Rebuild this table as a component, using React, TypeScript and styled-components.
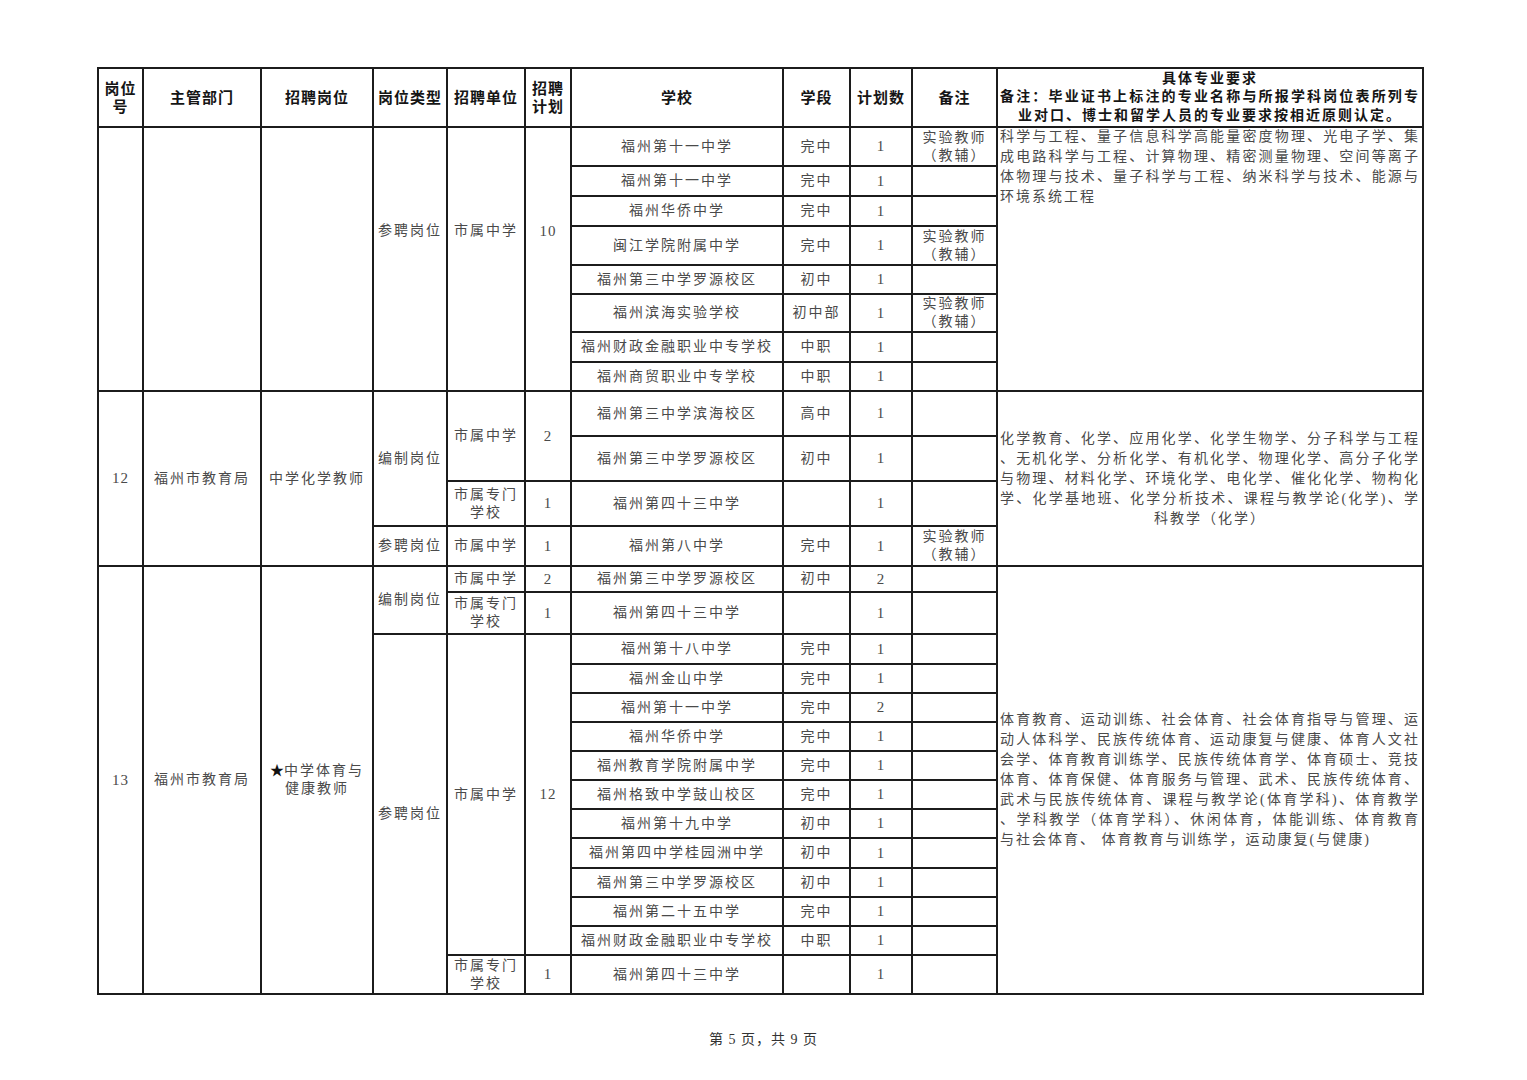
import React from "react";
import styled, { createGlobalStyle } from "styled-components";

const GlobalStyle = createGlobalStyle`
  html, body {
    margin: 0;
    padding: 0;
    background: #ffffff;
  }
  body {
    font-family: "Liberation Serif", "Noto Sans CJK SC", serif;
    color: #4a4a4a;
  }
`;

const Page = styled.div`
  width: 1527px;
  height: 1080px;
  padding-top: 67px;
  box-sizing: border-box;
`;

const Sheet = styled.table`
  margin-left: 97px;
  width: 1325px;
  border-collapse: collapse;
  table-layout: fixed;
  border: 2px solid #1c1c1c;
`;

const Col = styled.col<{ $w: number }>`
  width: ${(p) => p.$w}px;
`;

const Row = styled.tr<{ $h: number }>`
  height: ${(p) => p.$h}px;
`;

const Head = styled.th<{ $size?: number }>`
  border: 2px solid #1c1c1c;
  padding: 0 1px;
  font-size: ${(p) => p.$size ?? 15}px;
  font-weight: 700;
  letter-spacing: 1px;
  line-height: 18px;
  color: #151515;
  text-align: center;
  vertical-align: middle;
`;

const Cell = styled.td<{ $padTop?: number }>`
  border: 2px solid #1c1c1c;
  padding: ${(p) => (p.$padTop ? `${p.$padTop}px 1px 0` : "0 1px")};
  font-size: 14px;
  letter-spacing: 2px;
  line-height: 18px;
  color: #4a4a4a;
  text-align: center;
  vertical-align: ${(p) => (p.$padTop ? "top" : "middle")};
  overflow: hidden;
`;

const Num = styled.span`
  font-size: 15px;
  letter-spacing: 1px;
`;

const Star = styled.span`
  color: #111111;
  letter-spacing: 0;
`;

const Spec = styled.td<{ $top?: boolean }>`
  border: 2px solid #1c1c1c;
  padding: 0 2px;
  font-size: 14px;
  letter-spacing: 2px;
  line-height: 20px;
  color: #4a4a4a;
  vertical-align: ${(p) => (p.$top ? "top" : "middle")};
`;

const SpecBody = styled.div<{ $top?: boolean }>`
  margin-top: ${(p) => (p.$top ? -1 : 0)}px;
`;

const SpecHead = styled.th`
  border: 2px solid #1c1c1c;
  padding: 0 2px;
  font-size: 14px;
  font-weight: 700;
  letter-spacing: 2px;
  line-height: 18.5px;
  color: #151515;
  vertical-align: middle;
`;

const Line = styled.div<{ $mode: "fill" | "left" | "center" }>`
  white-space: nowrap;
  text-align: ${(p) => (p.$mode === "center" ? "center" : "left")};
  text-align-last: ${(p) =>
    p.$mode === "fill" ? "justify" : p.$mode === "center" ? "center" : "left"};
`;

const Footer = styled.div`
  margin-top: 35px;
  text-align: center;
  font-size: 14px;
  line-height: 20px;
  letter-spacing: 1px;
  color: #333333;
`;

type School = [string, string, string, boolean];

const note = (
  <>
    实验教师
    <br />
    （教辅）
  </>
);

const schoolCells = (s: School) => (
  <>
    <Cell>{s[0]}</Cell>
    <Cell>{s[1]}</Cell>
    <Cell>
      <Num>{s[2]}</Num>
    </Cell>
    <Cell>{s[3] ? note : null}</Cell>
  </>
);

const special = (
  <>
    市属专门
    <br />
    学校
  </>
);

const lines = (list: string[], last: "left" | "center") =>
  list.map((t, i) => (
    <Line key={i} $mode={i === list.length - 1 ? last : "fill"}>
      {t}
    </Line>
  ));

const spec11 = [
  "科学与工程、量子信息科学高能量密度物理、光电子学、集",
  "成电路科学与工程、计算物理、精密测量物理、空间等离子",
  "体物理与技术、量子科学与工程、纳米科学与技术、能源与",
  "环境系统工程",
];

const spec12 = [
  "化学教育、化学、应用化学、化学生物学、分子科学与工程",
  "、无机化学、分析化学、有机化学、物理化学、高分子化学",
  "与物理、材料化学、环境化学、电化学、催化化学、物构化",
  "学、化学基地班、化学分析技术、课程与教学论(化学)、学",
  "科教学（化学）",
];

const spec13 = [
  "体育教育、运动训练、社会体育、社会体育指导与管理、运",
  "动人体科学、民族传统体育、运动康复与健康、体育人文社",
  "会学、体育教育训练学、民族传统体育学、体育硕士、竞技",
  "体育、体育保健、体育服务与管理、武术、民族传统体育、",
  "武术与民族传统体育、课程与教学论(体育学科)、体育教学",
  "、学科教学（体育学科）、休闲体育，体能训练、体育教育",
  "与社会体育、 体育教育与训练学，运动康复(与健康)",
];

const g11: School[] = [
  ["福州第十一中学", "完中", "1", true],
  ["福州第十一中学", "完中", "1", false],
  ["福州华侨中学", "完中", "1", false],
  ["闽江学院附属中学", "完中", "1", true],
  ["福州第三中学罗源校区", "初中", "1", false],
  ["福州滨海实验学校", "初中部", "1", true],
  ["福州财政金融职业中专学校", "中职", "1", false],
  ["福州商贸职业中专学校", "中职", "1", false],
];
const h11 = [39, 30, 30, 39, 29, 38, 30, 29];

const g13: School[] = [
  ["福州第十八中学", "完中", "1", false],
  ["福州金山中学", "完中", "1", false],
  ["福州第十一中学", "完中", "2", false],
  ["福州华侨中学", "完中", "1", false],
  ["福州教育学院附属中学", "完中", "1", false],
  ["福州格致中学鼓山校区", "完中", "1", false],
  ["福州第十九中学", "初中", "1", false],
  ["福州第四中学桂园洲中学", "初中", "1", false],
  ["福州第三中学罗源校区", "初中", "1", false],
  ["福州第二十五中学", "完中", "1", false],
  ["福州财政金融职业中专学校", "中职", "1", false],
];
const h13 = [30, 29, 29, 29, 29, 29, 29, 30, 29, 29, 29];

export default function App() {
  return (
    <Page>
      <GlobalStyle />
      <Sheet>
        <colgroup>
          {[45, 118, 112, 74, 78, 46, 212, 67, 62, 85, 426].map((w, i) => (
            <Col key={i} $w={w} />
          ))}
        </colgroup>
        <thead>
          <Row $h={59}>
            <Head>
              岗位
              <br />号
            </Head>
            <Head>主管部门</Head>
            <Head>招聘岗位</Head>
            <Head>岗位类型</Head>
            <Head>招聘单位</Head>
            <Head>
              招聘
              <br />
              计划
            </Head>
            <Head>学校</Head>
            <Head>学段</Head>
            <Head>计划数</Head>
            <Head>备注</Head>
            <SpecHead>
              <Line $mode="center">具体专业要求</Line>
              <Line $mode="fill">备注：毕业证书上标注的专业名称与所报学科岗位表所列专</Line>
              <Line $mode="center">业对口、博士和留学人员的专业要求按相近原则认定。</Line>
            </SpecHead>
          </Row>
        </thead>
        <tbody>
          {g11.map((s, i) => (
            <Row key={`a${i}`} $h={h11[i]}>
              {i === 0 && (
                <>
                  <Cell rowSpan={8} />
                  <Cell rowSpan={8} />
                  <Cell rowSpan={8} />
                  <Cell rowSpan={8} $padTop={94}>
                    参聘岗位
                  </Cell>
                  <Cell rowSpan={8} $padTop={94}>
                    市属中学
                  </Cell>
                  <Cell rowSpan={8} $padTop={94}>
                    <Num>10</Num>
                  </Cell>
                </>
              )}
              {schoolCells(s)}
              {i === 0 && (
                <Spec rowSpan={8} $top>
                  <SpecBody $top>{lines(spec11, "left")}</SpecBody>
                </Spec>
              )}
            </Row>
          ))}

          <Row $h={45}>
            <Cell rowSpan={4}>
              <Num>12</Num>
            </Cell>
            <Cell rowSpan={4}>福州市教育局</Cell>
            <Cell rowSpan={4}>中学化学教师</Cell>
            <Cell rowSpan={3}>编制岗位</Cell>
            <Cell rowSpan={2}>市属中学</Cell>
            <Cell rowSpan={2}>
              <Num>2</Num>
            </Cell>
            {schoolCells(["福州第三中学滨海校区", "高中", "1", false])}
            <Spec rowSpan={4}>
              <SpecBody>{lines(spec12, "center")}</SpecBody>
            </Spec>
          </Row>
          <Row $h={45}>{schoolCells(["福州第三中学罗源校区", "初中", "1", false])}</Row>
          <Row $h={45}>
            <Cell>{special}</Cell>
            <Cell>
              <Num>1</Num>
            </Cell>
            {schoolCells(["福州第四十三中学", "", "1", false])}
          </Row>
          <Row $h={40}>
            <Cell>参聘岗位</Cell>
            <Cell>市属中学</Cell>
            <Cell>
              <Num>1</Num>
            </Cell>
            {schoolCells(["福州第八中学", "完中", "1", true])}
          </Row>

          <Row $h={26}>
            <Cell rowSpan={14}>
              <Num>13</Num>
            </Cell>
            <Cell rowSpan={14}>福州市教育局</Cell>
            <Cell rowSpan={14}>
              <Star>★</Star>中学体育与
              <br />
              健康教师
            </Cell>
            <Cell rowSpan={2}>编制岗位</Cell>
            <Cell>市属中学</Cell>
            <Cell>
              <Num>2</Num>
            </Cell>
            {schoolCells(["福州第三中学罗源校区", "初中", "2", false])}
            <Spec rowSpan={14}>
              <SpecBody>{lines(spec13, "left")}</SpecBody>
            </Spec>
          </Row>
          <Row $h={42}>
            <Cell>{special}</Cell>
            <Cell>
              <Num>1</Num>
            </Cell>
            {schoolCells(["福州第四十三中学", "", "1", false])}
          </Row>
          {g13.map((s, i) => (
            <Row key={`c${i}`} $h={h13[i]}>
              {i === 0 && (
                <>
                  <Cell rowSpan={12}>参聘岗位</Cell>
                  <Cell rowSpan={11}>市属中学</Cell>
                  <Cell rowSpan={11}>
                    <Num>12</Num>
                  </Cell>
                </>
              )}
              {schoolCells(s)}
            </Row>
          ))}
          <Row $h={39}>
            <Cell>{special}</Cell>
            <Cell>
              <Num>1</Num>
            </Cell>
            {schoolCells(["福州第四十三中学", "", "1", false])}
          </Row>
        </tbody>
      </Sheet>
      <Footer>第 5 页，共 9 页</Footer>
    </Page>
  );
}
